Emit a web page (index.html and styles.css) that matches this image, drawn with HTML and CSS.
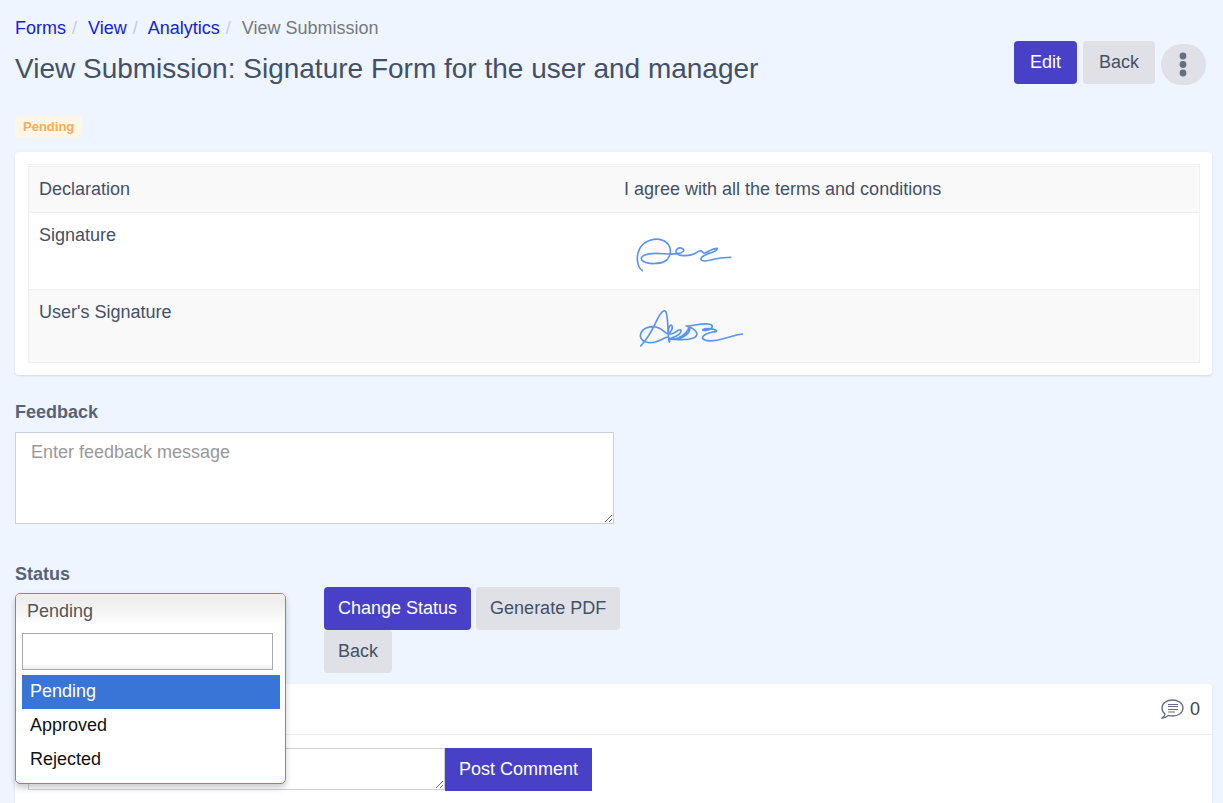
FILE: index.html
```
<!DOCTYPE html>
<html lang="en">
<head>
  <meta charset="UTF-8">
  <meta name="viewport" content="width=device-width, initial-scale=1.0">
  <title>View Submission</title>
  <link rel="stylesheet" href="styles.css">
</head>
<body>
  <div class="page">
    <header class="page-header">
      <div>
        <nav class="breadcrumb">
          <a href="#">Forms</a>
          <a href="#">View</a>
          <a href="#">Analytics</a>
          <span>View Submission</span>
        </nav>
        <h1>View Submission: Signature Form for the user and manager</h1>
      </div>
      <div class="header-actions">
        <button class="btn btn-primary">Edit</button>
        <button class="btn btn-secondary">Back</button>
        <button class="btn-more" aria-label="More actions">
          <svg width="8" height="26" viewBox="0 0 8 26" fill="#656d80">
            <circle cx="4" cy="4" r="3.4"/>
            <circle cx="4" cy="12.500" r="3.4"/>
            <circle cx="4" cy="21" r="3.4"/>
          </svg>
        </button>
      </div>
    </header>

    <span class="badge">Pending</span>

    <!-- Submission data -->
    <section class="card submission">
      <div class="table-wrap">
        <table>
          <tr>
            <td>Declaration</td>
            <td>I agree with all the terms and conditions</td>
          </tr>
          <tr>
            <td>Signature</td>
            <td>
              <svg class="signature" width="120" height="55" viewBox="72 9 360 165" role="img" aria-label="Signature">
                <path d="M127 152C110 140 108 110 118 88C130 62 168 50 193 63C215 76 217 103 200 120C184 134 140 134 126 121C117 108 140 100 165 100C190 100 212 105 232 101C250 99 256 91 248 86C236 79 225 90 229 99C236 109 260 108 276 104C290 100 296 91 303 92C310 95 306 101 314 99C328 93 340 84 352 85C354 92 338 97 325 101C311 106 302 113 303 119C307 127 330 121 345 117C362 113 376 113 392 112"/>
              </svg>
            </td>
          </tr>
          <tr>
            <td>User's Signature</td>
            <td>
              <svg class="signature" width="120" height="51" viewBox="72 240 360 153" role="img" aria-label="User's signature">
                <path d="M122 378C142 358 157 330 170 302C180 280 190 268 197 274C204 286 203 320 205 345C207 371 209 371 209 357C203 343 188 361 166 366C145 371 122 365 121 347C122 327 147 316 168 321C190 326 196 341 203 341C214 338 221 322 214 315C206 316 203 332 207 340C214 346 224 339 234 331C246 325 246 335 236 344C228 351 217 352 209 356C222 362 244 353 258 338C269 326 268 318 258 318C274 318 272 334 258 345C246 355 230 357 216 357C236 359 262 362 282 353C299 344 290 329 262 318C285 316 304 310 326 312C346 316 336 328 318 331C300 333 308 325 326 326C346 327 355 332 346 335C328 337 304 345 308 356C318 367 350 362 378 354C398 349 410 343 427 342"/>
              </svg>
            </td>
          </tr>
        </table>
      </div>
    </section>

    <!-- Feedback -->
    <section class="feedback">
      <label for="feedback">Feedback</label>
      <textarea id="feedback" placeholder="Enter feedback message"></textarea>
    </section>

    <!-- Status -->
    <section class="status-row">
      <div class="status-field">
        <label for="status">Status</label>
        <div class="chosen">
          <div class="chosen-box">
            <select id="status">
              <option selected>Pending</option>
              <option>Approved</option>
              <option>Rejected</option>
            </select>
            <input class="chosen-search" type="text" aria-label="Search status">
            <ul class="chosen-results" role="listbox" aria-label="Status">
              <li class="active" role="option" aria-selected="true">Pending</li>
              <li role="option">Approved</li>
              <li role="option">Rejected</li>
            </ul>
          </div>
        </div>
      </div>
      <div class="status-actions">
        <button class="btn btn-primary">Change Status</button>
        <button class="btn btn-secondary">Generate PDF</button>
        <button class="btn btn-secondary">Back</button>
      </div>
    </section>

    <!-- Comments -->
    <section class="card comments">
      <div class="comments-header">
        <svg width="23" height="20" viewBox="0 0 23 20" fill="none" stroke="#656d80">
          <path d="M4 15C2 13.500 1 11.500 1 9C1 4.500 5.500 1 11.500 1S22 4.500 22 9S17.500 17 11.500 17C10 17 8.500 16.800 7.300 16.400C5.500 18 3.500 18.900 1 19C2.800 17.800 4 16.500 4 15Z" stroke-width="1.300"/>
          <path d="M7 5.500h10M7 7.500h10M7 10.500h10M7 13h7" stroke-width="1.200"/>
        </svg>
        <span>0</span>
      </div>
      <form class="comment-form">
        <textarea aria-label="Comment"></textarea>
        <button class="btn btn-primary" type="button">Post Comment</button>
      </form>
    </section>
  </div>
</body>
</html>
```

FILE: styles.css
```
/* Base styles */
* {
  box-sizing: border-box;
}

body {
  margin: 0;
  background: #eef5fe;
  color: #435066;
  font-family: "Liberation Sans", Arial, sans-serif;
  font-size: 18px;
  line-height: 24px;
}

button,
input,
select,
textarea {
  font: inherit;
}

.page {
  padding: 16px 11px 0 15px;
}

/* Header */
.page-header {
  display: flex;
  justify-content: space-between;
  margin-bottom: 29px;
}

.breadcrumb a {
  color: #1520d8;
  text-decoration: none;
}

.breadcrumb a::after {
  content: "/";
  padding: 0 6px;
  color: #c8ccd2;
}

.breadcrumb span {
  color: #75787d;
}

h1 {
  margin: 11px 0 0;
  font-size: 28px;
  font-weight: 400;
  line-height: 36px;
}

.header-actions {
  display: flex;
  gap: 6px;
  padding: 25px 6px 0 0;
}

/* Buttons */
.btn {
  height: 43px;
  padding: 0 14px 2px;
  border: none;
  border-radius: 4px;
  white-space: nowrap;
  cursor: pointer;
}

.header-actions .btn {
  padding: 0 16px 2px;
}

.btn-primary {
  background: #4840c6;
  color: #fff;
}

.btn-secondary {
  background: #dfe1e6;
  color: #435066;
}

.btn-more {
  display: flex;
  align-items: center;
  justify-content: center;
  width: 45px;
  height: 41px;
  margin-top: 3px;
  padding: 0 2px 0 0;
  border: none;
  border-radius: 21px;
  background: #dfe1e6;
  cursor: pointer;
}

.badge {
  display: block;
  width: fit-content;
  padding: 0 8px;
  border-radius: 4px;
  background: #fef6e6;
  color: #f6ad55;
  font-size: 13px;
  font-weight: 700;
  line-height: 22px;
}

/* Cards */
.card {
  background: #fff;
  border-radius: 4px;
  box-shadow: 0 1px 2px rgba(40, 60, 90, 0.15);
}

.submission {
  margin-top: 14px;
  padding: 12px 12px 12px 13px;
}

.table-wrap {
  padding-top: 1px;
  border: 1px solid #eef0f2;
}

table {
  width: 100%;
  table-layout: fixed;
  border-collapse: collapse;
}

td {
  padding: 10px 10px 11px;
  border-top: 1px solid #eef0f2;
  vertical-align: top;
}

tr:nth-child(odd) {
  background: #f9f9f9;
}

.signature {
  display: block;
  fill: none;
  stroke: #5a93f0;
  stroke-width: 5;
  stroke-linecap: round;
  stroke-linejoin: round;
}

/* Feedback and status */
label {
  display: block;
  color: #56627a;
  font-weight: 700;
}

textarea {
  display: block;
  border: 1px solid #cbd1dc;
  border-radius: 0;
  background: #fff;
}

textarea::placeholder {
  color: #999;
}

.feedback {
  width: 50%;
  margin-top: 25px;
}

.feedback textarea {
  width: 100%;
  height: 92px;
  margin-top: 8px;
  padding: 7px 15px;
}

.status-row {
  display: grid;
  grid-template-columns: 271px 300px;
  gap: 38px;
  margin-top: 38px;
}

.status-actions {
  display: flex;
  flex-wrap: wrap;
  column-gap: 5px;
  padding-top: 25px;
}

/* Dropdown */
.chosen {
  position: relative;
  height: 38px;
  margin-top: 7px;
}

.chosen-box {
  position: absolute;
  top: 0;
  left: 0;
  right: 0;
  z-index: 10;
  border: 1px solid #5c8fd6;
  border-radius: 5px;
  background: #fff;
  box-shadow: 0 4px 6px rgba(0, 0, 0, 0.2);
}

.chosen-box select {
  display: block;
  width: 100%;
  height: 33px;
  padding: 0 11px;
  border: none;
  border-radius: 4px 4px 0 0;
  appearance: none;
  background: linear-gradient(#eee 20%, #fff 95%);
  color: #555;
}

.chosen-search {
  display: block;
  width: 251px;
  height: 37px;
  margin: 6px 6px 5px;
  padding: 0 8px;
  border: 1px solid #aaa;
  background: linear-gradient(#fff 85%, #eee);
}

.chosen-results {
  margin: 0 5px 6px 6px;
  padding: 0;
  list-style: none;
  color: #111;
}

.chosen-results li {
  padding: 4px 8px 6px;
}

.chosen-results .active {
  background: #3875d7;
  color: #fff;
}

/* Comments */
.comments {
  margin-top: 11px;
  border-radius: 4px 4px 0 0;
}

.comments-header {
  display: flex;
  align-items: center;
  justify-content: flex-end;
  gap: 6px;
  height: 51px;
  padding: 0 12px;
  border-bottom: 1px solid #eef0f2;
  color: #444;
}

.comment-form {
  display: flex;
  padding: 13px 13px 12px;
}

.comment-form textarea {
  width: 417px;
  height: 42px;
}

.comment-form .btn {
  border-radius: 0;
}
```
